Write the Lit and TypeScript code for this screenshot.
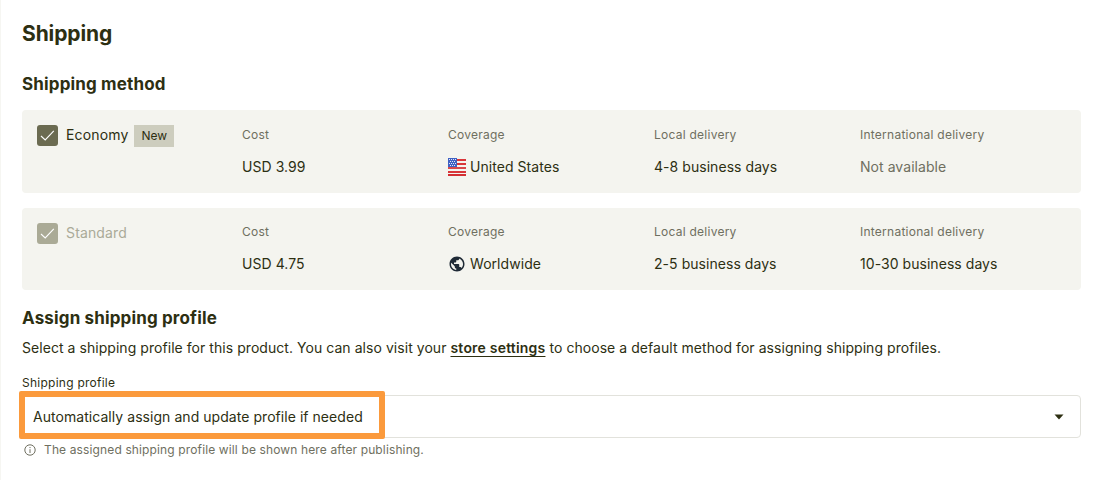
import { LitElement, html, css, svg } from "lit";
import { customElement } from "lit/decorators.js";

const usFlag = svg`<svg class="flag" width="18" height="18" viewBox="0 0 18 18">
  <rect x="0" y="0" width="18" height="18" fill="#f4f4f0"/>
  <rect y="1" width="18" height="2" fill="#d9363a"/>
  <rect y="5" width="18" height="2" fill="#d9363a"/>
  <rect y="9" width="18" height="2" fill="#d9484c"/>
  <rect y="13" width="18" height="2" fill="#d9363a"/>
  <rect y="16" width="18" height="2" fill="#d32f33"/>
  <rect x="0" y="0" width="9" height="9" fill="#3f61c4"/>
  <g fill="#dfe6f7">
    <rect x="1" y="1" width="1" height="1"/><rect x="3" y="1" width="1" height="1"/><rect x="5" y="1" width="1" height="1"/><rect x="7" y="1" width="1" height="1"/>
    <rect x="2" y="3" width="1" height="1"/><rect x="4" y="3" width="1" height="1"/><rect x="6" y="3" width="1" height="1"/>
    <rect x="1" y="5" width="1" height="1"/><rect x="3" y="5" width="1" height="1"/><rect x="5" y="5" width="1" height="1"/><rect x="7" y="5" width="1" height="1"/>
    <rect x="2" y="7" width="1" height="1"/><rect x="4" y="7" width="1" height="1"/><rect x="6" y="7" width="1" height="1"/>
  </g>
</svg>`;

const globe = svg`<svg class="flag" width="18" height="18" viewBox="0 0 24 24">
  <path fill="#1f2a36" d="M12 2C6.48 2 2 6.48 2 12s4.48 10 10 10 10-4.480 10-10S17.520 2 12 2zm-1 17.930c-3.950-.490-7-3.850-7-7.930 0-.620.080-1.210.210-1.790L9 15v1c0 1.100.900 2 2 2v1.930zm6.900-2.540c-.260-.810-1-1.390-1.900-1.390h-1v-3c0-.550-.450-1-1-1H8v-2h2c.550 0 1-.450 1-1V7h2c1.100 0 2-.900 2-2v-.410c2.930 1.190 5 4.060 5 7.410 0 2.080-.800 3.970-2.100 5.390z"/>
</svg>`;

const check = svg`<svg width="21" height="21" viewBox="0 0 21 21" fill="none"><path d="M4 11 L8.200 15 L16.800 5.800" stroke="#fff" stroke-width="1.100"/></svg>`;

const info = svg`<svg width="12" height="12" viewBox="0 0 12 12" fill="none" stroke="#6f6f60" stroke-width="1">
  <circle cx="6" cy="6" r="5.200"/><path d="M6 5.200V9"/><path d="M6 3v1.100"/></svg>`;

const caret = svg`<svg width="10" height="6" viewBox="0 0 10 6"><path d="M0.500 0.500H9.500L5 5.500Z" fill="#2d2f12"/></svg>`;

interface Method {
  name: string;
  isNew: boolean;
  disabled: boolean;
  cost: string;
  icon: unknown;
  coverage: string;
  local: string;
  intl: string;
  intlMuted: boolean;
}

const methods: Method[] = [
  { name: "Economy", isNew: true, disabled: false, cost: "USD 3.99", icon: usFlag, coverage: "United States", local: "4-8 business days", intl: "Not available", intlMuted: true },
  { name: "Standard", isNew: false, disabled: true, cost: "USD 4.75", icon: globe, coverage: "Worldwide", local: "2-5 business days", intl: "10-30 business days", intlMuted: false },
];

@customElement("app-root")
export class AppRoot extends LitElement {
  static styles = css`
    :host {
      display: block;
      height: 480px;
      box-sizing: border-box;
      background: #fff;
      border-left: 1px solid #f6f6f2;
      padding: 20px 20px 0 21px;
      font-family: "Inter", "Liberation Sans", sans-serif;
      color: #2d2f12;
      overflow: hidden;
    }
    h1 {
      margin: 0;
      font-size: 21px;
      line-height: 28px;
      font-weight: 700;
      letter-spacing: -0.1px;
    }
    h2 {
      margin: 0;
      font-size: 17px;
      line-height: 22px;
      font-weight: 700;
      letter-spacing: 0.15px;
    }
    .method-title {
      margin-top: 25px;
    }
    .cards {
      display: flex;
      flex-direction: column;
      gap: 15px;
      margin-top: 15px;
    }
    .card {
      display: grid;
      grid-template-columns: 205px 206px 206px 206px 1fr;
      background: #f4f4ef;
      border-radius: 4px;
      padding: 15px 15px 0 15px;
      height: 83px;
      box-sizing: border-box;
    }
    .card.second {
      height: 82px;
    }
    .card:not(.second) .head {
      margin-top: 1px;
    }
    .name {
      display: flex;
      align-items: flex-start;
      font-size: 14px;
      line-height: 19px;
      letter-spacing: 0.15px;
    }
    .box {
      width: 21px;
      height: 21px;
      border-radius: 3px;
      background: #6b6b51;
      margin-right: 8px;
      flex: none;
    }
    .box svg {
      display: block;
    }
    .disabled .box {
      background: #aaaa96;
    }
    .disabled .label {
      color: #aaaa98;
    }
    .badge {
      margin-left: 6px;
      background: #cdcdbe;
      height: 22px;
      line-height: 22px;
      padding: 0 7px;
      font-size: 12px;
      letter-spacing: 0;
    }
    .head {
      font-size: 12px;
      line-height: 18px;
      color: #6f6f60;
      letter-spacing: 0.25px;
    }
    .val {
      margin-top: 12px;
      font-size: 14px;
      line-height: 21px;
      letter-spacing: 0.05px;
      display: flex;
      align-items: center;
      gap: 4px;
    }
    .val.muted {
      color: #6f6f60;
    }
    .flag {
      flex: none;
    }
    .assign {
      margin-top: 17px;
    }
    .desc {
      margin: 9px 0 0;
      font-size: 14px;
      line-height: 20px;
      letter-spacing: 0.05px;
    }
    .desc a {
      color: inherit;
      font-weight: 600;
      letter-spacing: 0.2px;
      text-decoration: underline;
      text-underline-offset: 3px;
    }
    .field-label {
      margin-top: 17px;
      font-size: 12px;
      line-height: 16px;
      letter-spacing: 0.25px;
    }
    .select-wrap {
      position: relative;
      margin-top: 4px;
    }
    .select {
      display: flex;
      align-items: center;
      justify-content: space-between;
      height: 43px;
      box-sizing: border-box;
      border: 1px solid #e2e2dc;
      border-radius: 4px;
      padding: 0 16px 0 10px;
      font-size: 14px;
      letter-spacing: 0.05px;
      background: #fff;
    }
    .highlight {
      position: absolute;
      left: -3px;
      top: -4px;
      width: 366px;
      height: 48px;
      box-sizing: border-box;
      border: 6px solid #fb9a3c;
      border-radius: 2px;
      pointer-events: none;
    }
    .hint {
      display: flex;
      align-items: center;
      gap: 8px;
      margin-top: 4px;
      padding-left: 2px;
      font-size: 12px;
      line-height: 16px;
      color: #6f6f60;
      letter-spacing: 0.13px;
    }
  `;

  private renderCard(m: Method, i: number) {
    return html`
      <div class="card ${i === 1 ? "second" : ""}">
        <div class="name ${m.disabled ? "disabled" : ""}">
          <div class="box">${check}</div>
          <span class="label">${m.name}</span>
          ${m.isNew ? html`<span class="badge">New</span>` : null}
        </div>
        <div><div class="head">Cost</div><div class="val">${m.cost}</div></div>
        <div><div class="head">Coverage</div><div class="val">${m.icon}<span>${m.coverage}</span></div></div>
        <div><div class="head">Local delivery</div><div class="val">${m.local}</div></div>
        <div><div class="head">International delivery</div><div class="val ${m.intlMuted ? "muted" : ""}">${m.intl}</div></div>
      </div>
    `;
  }

  render() {
    return html`
      <h1>Shipping</h1>
      <h2 class="method-title">Shipping method</h2>
      <div class="cards">${methods.map((m, i) => this.renderCard(m, i))}</div>
      <h2 class="assign">Assign shipping profile</h2>
      <p class="desc">Select a shipping profile for this product. You can also visit your <a href="#">store settings</a> to choose a default method for assigning shipping profiles.</p>
      <div class="field-label">Shipping profile</div>
      <div class="select-wrap">
        <div class="select"><span>Automatically assign and update profile if needed</span>${caret}</div>
        <div class="highlight"></div>
      </div>
      <div class="hint">${info}<span>The assigned shipping profile will be shown here after publishing.</span></div>
    `;
  }
}
